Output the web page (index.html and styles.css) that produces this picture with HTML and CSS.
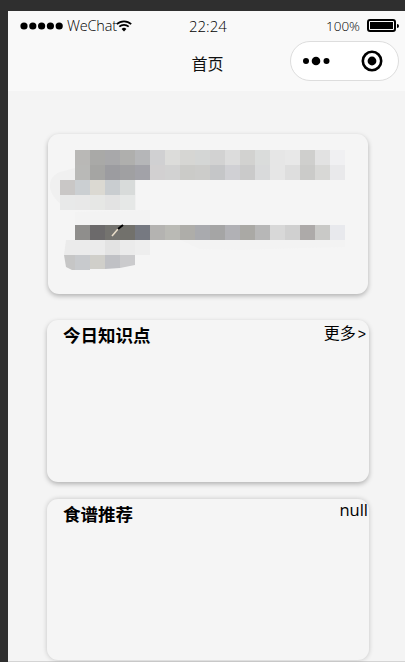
FILE: index.html
```html
<!DOCTYPE html>
<html lang="en">
<head>
    <meta charset="UTF-8">
    <meta name="viewport" content="width=device-width, initial-scale=1.0">
    <title>首页</title>
    <link rel="stylesheet" href="styles.css">
</head>
<body>
    <div class="phone">
        <div class="status-bar">
            <div class="status-left">
                <svg class="signal" width="45" height="10" viewBox="0 0 45 10" fill="#000">
                    <circle cx="4" cy="5" r="3.6"></circle>
                    <circle cx="12.8" cy="5" r="3.6"></circle>
                    <circle cx="21.6" cy="5" r="3.6"></circle>
                    <circle cx="30.4" cy="5" r="3.6"></circle>
                    <circle cx="39.2" cy="5" r="3.6"></circle>
                </svg>
                <span class="carrier">WeChat</span>
                <svg class="wifi" width="16" height="12" viewBox="0 0 16 12" fill="none" stroke="#000" stroke-width="1.7">
                    <path d="M0.8 4.2a10.4 10.4 0 0 1 14.4 0"></path>
                    <path d="M3.3 6.7a6.8 6.8 0 0 1 9.4 0"></path>
                    <path d="M8 11.6 5.6 8.9a3.4 3.4 0 0 1 4.8 0z" fill="#000" stroke="none"></path>
                </svg>
            </div>
            <span class="clock">22:24</span>
            <div class="status-right">
                <span class="percent">100%</span>
                <div class="battery"><div class="battery-level"></div></div>
                <div class="battery-nub"></div>
            </div>
        </div>

        <div class="nav-bar">
            <span class="nav-title">首页</span>
            <div class="capsule">
                <svg width="32" height="12" viewBox="0 0 32 12" fill="#000">
                    <circle cx="5" cy="6" r="3"></circle>
                    <circle cx="15" cy="6" r="4.3"></circle>
                    <circle cx="25.5" cy="6" r="3"></circle>
                </svg>
                <svg width="22" height="22" viewBox="0 0 22 22">
                    <circle cx="11" cy="11" r="9.2" fill="none" stroke="#000" stroke-width="2.6"></circle>
                    <circle cx="11" cy="11" r="4.4" fill="#000"></circle>
                </svg>
            </div>
        </div>

        <div class="content">
            <div class="card card-banner">
                <svg class="mosaic" width="320" height="160" viewBox="48 134 320 160">
                    <path class="smudge" d="M136 180 L136 210 L75 210 C62 208 50 196 50 186 C50 178 55 174 60 172 L75 168 L75 180 Z"></path>
                    <path class="smudge-faint" d="M75 212 L150 210 L150 225 L75 225 Z M180 240 L345 240 L345 247 L300 248 L240 250 L200 249 Z"></path>

                    <rect x="75" y="150" fill="#b9b8b6"></rect><rect x="90" y="150" fill="#a9a9a7"></rect><rect x="105" y="150" fill="#a8a8aa"></rect><rect x="120" y="150" fill="#afafad"></rect><rect x="135" y="150" fill="#b5b6b8"></rect><rect x="150" y="150" fill="#d0d0d2"></rect><rect x="165" y="150" fill="#dcdcda"></rect><rect x="180" y="150" fill="#d6d6d3"></rect><rect x="195" y="150" fill="#d4d6d5"></rect><rect x="210" y="150" fill="#d2d2d2"></rect><rect x="225" y="150" fill="#dcdcdc"></rect><rect x="240" y="150" fill="#d2d2d0"></rect><rect x="255" y="150" fill="#dadcdb"></rect><rect x="270" y="150" fill="#e6e6e6"></rect><rect x="285" y="150" fill="#e8e8e8"></rect><rect x="300" y="150" fill="#cfcfcd"></rect><rect x="315" y="150" fill="#e2e2e2"></rect><rect x="330" y="150" fill="#f0f0f2"></rect>

                    <rect x="75" y="165" fill="#b9b9b7"></rect><rect x="90" y="165" fill="#a5a5a3"></rect><rect x="105" y="165" fill="#9c9ca0"></rect><rect x="120" y="165" fill="#a0a0a2"></rect><rect x="135" y="165" fill="#a2a2a8"></rect><rect x="150" y="165" fill="#d2d0d1"></rect><rect x="165" y="165" fill="#d2d2d2"></rect><rect x="180" y="165" fill="#cbcbc8"></rect><rect x="195" y="165" fill="#ccccca"></rect><rect x="210" y="165" fill="#c5c6c8"></rect><rect x="225" y="165" fill="#d0d0d4"></rect><rect x="240" y="165" fill="#cacaca"></rect><rect x="255" y="165" fill="#d9dadb"></rect><rect x="270" y="165" fill="#e6e6e6"></rect><rect x="285" y="165" fill="#dedede"></rect><rect x="300" y="165" fill="#cbcbc9"></rect><rect x="315" y="165" fill="#d8d8d6"></rect><rect x="330" y="165" fill="#e9e9eb"></rect>

                    <rect x="60" y="180" fill="#c9c7c6"></rect><rect x="75" y="180" fill="#cbcfd2"></rect><rect x="90" y="180" fill="#dbd9d2"></rect><rect x="105" y="180" fill="#c9cdd0"></rect><rect x="120" y="180" fill="#d8dbda"></rect>
                    <rect x="60" y="195" fill="#e8e9e9"></rect><rect x="75" y="195" fill="#e8e8e8"></rect><rect x="90" y="195" fill="#e6e7e5"></rect><rect x="105" y="195" fill="#e3e3e3"></rect><rect x="120" y="195" fill="#e6e8e7"></rect>

                    <rect x="75" y="225" fill="#8f8e8c"></rect><rect x="90" y="225" fill="#6c6a6b"></rect><rect x="105" y="225" fill="#74736f"></rect><rect x="120" y="225" fill="#72716c"></rect><rect x="135" y="225" fill="#767981"></rect><rect x="150" y="225" fill="#b4b3b1"></rect><rect x="165" y="225" fill="#babab5"></rect><rect x="180" y="225" fill="#aeada9"></rect><rect x="195" y="225" fill="#a9aaae"></rect><rect x="210" y="225" fill="#a5a5a5"></rect><rect x="225" y="225" fill="#b1b1b5"></rect><rect x="240" y="225" fill="#aaa9a5"></rect><rect x="255" y="225" fill="#b7b7b7"></rect><rect x="270" y="225" fill="#d8d8d8"></rect><rect x="285" y="225" fill="#d0d0d0"></rect><rect x="300" y="225" fill="#adaaa9"></rect><rect x="315" y="225" fill="#c9c9c7"></rect><rect x="330" y="225" fill="#e8e9ed"></rect>

                    <path d="M66 240 H150 V253 L135 255 H64 Z" fill="#ebebeb"></path>
                    <rect x="105" y="240" fill="#e3e3e3"></rect><rect x="135" y="240" fill="#eeeeee"></rect>
                    <path d="M64 255 H75 V270 H72 L66 267 Z" fill="#c6c6c6"></path>
                    <path d="M75 255 H90 V270 H75 Z" fill="#c8cacd"></path>
                    <path d="M90 255 H105 V269 H90 Z" fill="#d0cfca"></path>
                    <path d="M105 255 H120 V268 L105 269 Z" fill="#c0c1c5"></path>
                    <path d="M120 255 H135 V265 L120 268 Z" fill="#cbcbcd"></path>

                    <path d="M112 236 L118 229" stroke="#e8dcc8" stroke-width="1.6" fill="none"></path>
                    <path d="M118 229 L123 225" stroke="#000" stroke-width="2" fill="none"></path>
                </svg>
            </div>

            <div class="card card-section">
                <div class="card-head">
                    <span class="card-title">今日知识点</span>
                    <span class="card-more">更多<span class="more-arrow">&gt;</span></span>
                </div>
            </div>

            <div class="card card-section card-last">
                <div class="card-head">
                    <span class="card-title">食谱推荐</span>
                    <span class="card-null">null</span>
                </div>
            </div>
        </div>
    </div>
</body>
</html>
```

FILE: styles.css
```css
html, body {
    height: 100%;
    margin: 0;
    overflow: hidden;
}
body {
    background-color: #2f2f2f;
    font-family: "Open Sans", "Noto Sans CJK SC", sans-serif;
    color: #000;
}
.phone {
    margin: 11px 0 0 8px;
    height: 651px;
    background-color: #f4f4f4;
    border-bottom: 1px solid #d4d4d4;
    box-sizing: border-box;
    display: flex;
    flex-direction: column;
}
.status-bar {
    height: 29px;
    background-color: #f9f9f9;
    display: flex;
    align-items: center;
    justify-content: space-between;
    padding: 0 6px 0 12px;
    position: relative;
    font-size: 14px;
    color: #000;
}
.status-left, .status-right {
    display: flex;
    align-items: center;
}
.carrier {
    margin: 0 0 0 2px;
    font-weight: 300;
    font-size: 14.5px;
    letter-spacing: -0.2px;
}
.wifi {
    margin-left: -1px;
}
.clock {
    position: absolute;
    left: 181px;
    font-size: 15px;
    font-weight: 300;
}
.percent {
    font-size: 13.5px;
    font-weight: 300;
    margin-right: 7px;
}
.battery {
    width: 23px;
    height: 7px;
    border: 2px solid #000;
    border-radius: 3px;
    padding: 1px;
    background-color: #f9f9f9;
}
.battery-level {
    height: 100%;
    background-color: #000;
}
.battery-nub {
    width: 2px;
    height: 4px;
    margin-left: 1px;
    background-color: #000;
    border-radius: 0 2px 2px 0;
}
.nav-bar {
    height: 51px;
    background-color: #f9f9f9;
    display: flex;
    align-items: center;
    justify-content: center;
    position: relative;
}
.nav-title {
    font-size: 16px;
    color: #111;
    font-family: "Noto Sans CJK SC", sans-serif;
    margin-left: 2px;
    margin-bottom: 5px;
}
.capsule {
    position: absolute;
    left: 282px;
    top: 1px;
    width: 109px;
    height: 40px;
    box-sizing: border-box;
    background-color: #fff;
    border: 1px solid #ddd;
    border-radius: 20px;
    display: flex;
    align-items: center;
    justify-content: space-between;
    padding: 0 15px 0 10px;
}
.content {
    flex: 1;
    padding: 43px 36px 0 39px;
    display: flex;
    flex-direction: column;
}
.card {
    background-color: #f5f5f5;
    border-radius: 11px;
    box-shadow: 0 2px 5px rgba(0, 0, 0, 0.28);
}
.card-banner {
    height: 160px;
    margin: 0 1px 26px 1px;
}
.mosaic {
    display: block;
}
.mosaic rect {
    width: 15px;
    height: 15px;
}
.smudge {
    fill: #f0f0f0;
}
.smudge-faint {
    fill: #f3f3f3;
}
.card-section {
    height: 162px;
    margin-bottom: 17px;
}
.card-last {
    height: 161px;
    margin-bottom: 0;
    box-shadow: 0 0 5px rgba(0, 0, 0, 0.2);
}
.card-head {
    display: flex;
    justify-content: space-between;
    align-items: flex-start;
    padding-left: 16px;
}
.card-title {
    font-family: "Noto Sans CJK SC", sans-serif;
    font-size: 17.5px;
    font-weight: 700;
    line-height: 30px;
}
.card-more {
    font-family: "Noto Sans CJK SC", sans-serif;
    font-size: 16px;
    line-height: 24px;
    padding-right: 3px;
}
.more-arrow {
    font-family: "Liberation Sans", sans-serif;
    font-size: 14px;
    margin-left: 2px;
}
.card-null {
    font-size: 16.5px;
    line-height: 22px;
    padding-right: 1px;
}
```
